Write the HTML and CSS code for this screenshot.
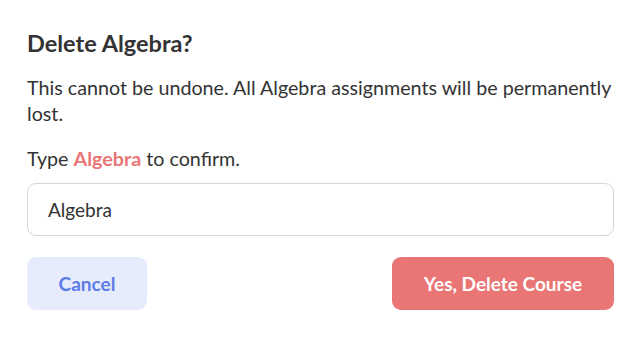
FILE: index.html
```html
<!DOCTYPE html>
<html>
<head>
<meta charset="utf-8">
<link rel="stylesheet" href="styles.css">
</head>
<body>
<div class="dialog">
  <h1 class="title">Delete Algebra?</h1>
  <p class="message">This cannot be undone. All Algebra assignments will be permanently lost.</p>
  <p class="prompt">Type <span class="accent">Algebra</span> to confirm.</p>
  <div class="field">Algebra</div>
  <div class="actions">
    <button class="btn btn-cancel">Cancel</button>
    <button class="btn btn-danger">Yes, Delete Course</button>
  </div>
</div>
</body>
</html>
```
FILE: styles.css
```css
* { box-sizing: border-box; }
html, body { margin: 0; padding: 0; background: #fff; }
body { font-family: Lato, "Open Sans", sans-serif; color: #333; }
.dialog { width: 640px; padding: 28px 26px 0 27px; }
.title { margin: 0; font-size: 23.5px; font-weight: 700; line-height: 30px; color: #333; }
.message { margin: 17px 0 0; font-size: 19.7px; line-height: 26px; color: #333; }
.prompt { margin: 19px 0 0; font-size: 19.7px; line-height: 26px; color: #333; }
.accent { color: #E97575; font-weight: 700; }
.field { margin-top: 11px; height: 53px; border: 1px solid #d6d6d6; border-radius: 9px; padding: 0 20px; display: flex; align-items: center; font-size: 19px; color: #333; }
.actions { margin-top: 21px; display: flex; justify-content: space-between; }
.btn { height: 53px; border: 0; border-radius: 9px; font-family: inherit; font-size: 19px; font-weight: 700; padding: 0; }
.btn-cancel { width: 120px; background: #E6ECFC; color: #5B7BE6; }
.btn-danger { width: 222px; background: #E97575; color: #fff; }
```
